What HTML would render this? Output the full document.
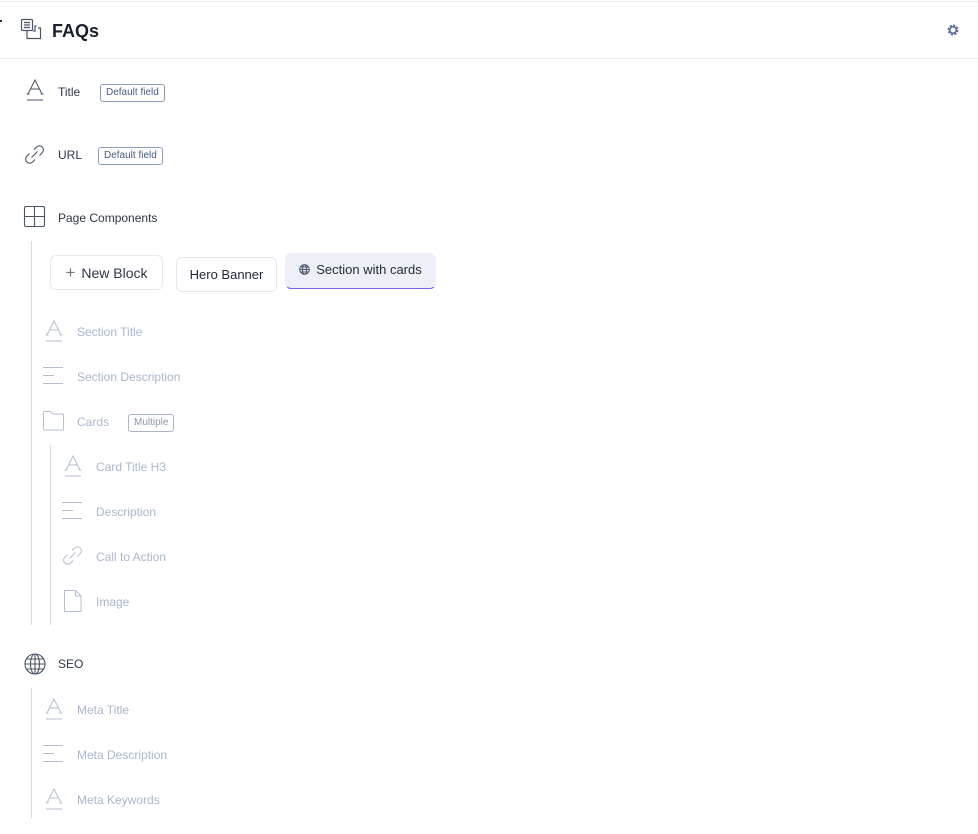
<!DOCTYPE html>
<html><head><meta charset="utf-8"><style>
*{margin:0;padding:0;box-sizing:border-box}
body{width:978px;height:834px;background:#fff;font-family:"Liberation Sans",sans-serif;position:relative;overflow:hidden}
.a{position:absolute}
.t{position:absolute;font-size:12px;line-height:14px;white-space:nowrap}
.d{color:#2d3748}
.l{color:#a9b7ce}
.badge{position:absolute;font-size:10px;line-height:16px;border:1px solid #8a9bbd;border-radius:3px;padding:0 5px;color:#4a5b80}
.vl{position:absolute;width:1px;background:#d5dbe5}
svg{position:absolute;overflow:visible}
.btn{position:absolute;border:1px solid #e6e9ef;border-radius:6px;font-size:14px;color:#1f2937;display:flex;align-items:center;justify-content:center}
</style></head><body>
<div class="a" style="left:0;top:1px;width:978px;height:1px;background:#eceef2"></div>
<div class="a" style="left:0;top:58px;width:978px;height:1px;background:#eceef2"></div>
<div class="a" style="left:0;top:20px;width:2px;height:2px;background:#333"></div>
<svg style="left:21px;top:19px" width="22" height="22" viewBox="0 0 22 22" fill="none" stroke="#4a5568" stroke-width="1.2"><rect x="0.5" y="0.5" width="11" height="11" rx="1"/><path d="M3 3.5h6M3 6h6M3 8.5h6"/><path d="M14 8v-1h1.5M6 12v7.5h13.5V9h-2.5"/><path d="M9 12v-0.5M12 12h2v-4"/></svg>
<div class="a" style="left:52px;top:20px;font-size:18px;font-weight:bold;color:#1a202c;line-height:22px">FAQs</div>
<svg style="left:947px;top:24px" width="12" height="12" viewBox="0 0 12 12"><circle cx="6" cy="6" r="4.2" fill="none" stroke="#5f6f94" stroke-width="2.6" stroke-dasharray="2 1.3"/><circle cx="6" cy="6" r="3.2" fill="none" stroke="#5f6f94" stroke-width="1.6"/></svg>

<!-- Title -->
<svg style="left:26px;top:79px" width="18" height="22" viewBox="0 0 18 22" fill="none" stroke="#4a5568" stroke-width="1"><path d="M2 15L9 1l7 14M4.5 10h9M0.5 15h3M14.5 15h3M1 21h16"/></svg>
<div class="t d" style="left:58px;top:85px">Title</div>
<div class="badge" style="left:100px;top:84px">Default field</div>
<!-- URL -->
<svg style="left:24px;top:144px" width="21" height="21" viewBox="0 0 21 21" fill="none" stroke="#4a5568" stroke-width="1.1"><path d="M7.5 13.5l6-6M10 5.5l2.5-2.5a4 4 0 015.7 5.7L15.5 11.5M11 15.5l-2.5 2.5a4 4 0 01-5.7-5.7L5.5 9.5"/></svg>
<div class="t d" style="left:58px;top:148px">URL</div>
<div class="badge" style="left:98px;top:147px">Default field</div>
<!-- Page Components -->
<svg style="left:24px;top:206px" width="21" height="21" viewBox="0 0 21 21" fill="none" stroke="#4a5568" stroke-width="1.1"><rect x="0.5" y="0.5" width="20" height="20" rx="1.5"/><path d="M10.5 0.5v20M0.5 10.5h20"/></svg>
<div class="t d" style="left:58px;top:211px">Page Components</div>
<div class="vl" style="left:31px;top:241px;height:384px"></div>

<div class="btn" style="left:50px;top:255px;width:113px;height:35px;color:#2d3748"><span style="font-size:17px;color:#6b7280;margin-right:6px;font-weight:300">+</span>New Block</div>
<div class="btn" style="left:176px;top:257px;width:101px;height:35px;font-size:13px">Hero Banner</div>
<div class="btn" style="left:285px;top:253px;width:151px;height:36px;background:#eef0f8;border-color:#eef0f8;border-bottom:1.5px solid #6e62e5;font-size:13px;padding-bottom:4px"><svg style="position:static;margin-right:6px" width="11" height="11" viewBox="0 0 11 11" fill="none" stroke="#4a5568" stroke-width="1"><circle cx="5.5" cy="5.5" r="4.8"/><ellipse cx="5.5" cy="5.5" rx="2" ry="4.8"/><path d="M0.7 5.5h9.6M1.5 3h8M1.5 8h8"/></svg>Section with cards</div>

<!-- sub items -->
<svg style="left:45px;top:320px" width="18" height="22" viewBox="0 0 18 22" fill="none" stroke="#b5bfd0" stroke-width="1"><path d="M2 15L9 1l7 14M4.5 10h9M0.5 15h3M14.5 15h3M1 21h16"/></svg>
<div class="t l" style="left:77px;top:325px">Section Title</div>
<svg style="left:43px;top:367px" width="21" height="18" viewBox="0 0 21 18" fill="none" stroke="#b5bfd0" stroke-width="1"><path d="M0 0.5h20M0 8.5h11M0 16.5h20"/></svg>
<div class="t l" style="left:77px;top:370px">Section Description</div>
<svg style="left:43px;top:410px" width="21" height="21" viewBox="0 0 21 21" fill="none" stroke="#b5bfd0" stroke-width="1"><path d="M0.5 2.5a1 1 0 011-1h6l2 2.5h10a1 1 0 011 1v14a1 1 0 01-1 1h-18a1 1 0 01-1-1zM9.5 4h10.5"/></svg>
<div class="t l" style="left:77px;top:415px">Cards</div>
<div class="badge" style="left:128px;top:414px;color:#8a96ad;border-color:#a9b4c8">Multiple</div>
<div class="vl" style="left:50px;top:445px;height:180px"></div>

<svg style="left:64px;top:455px" width="18" height="22" viewBox="0 0 18 22" fill="none" stroke="#b5bfd0" stroke-width="1"><path d="M2 15L9 1l7 14M4.5 10h9M0.5 15h3M14.5 15h3M1 21h16"/></svg>
<div class="t l" style="left:96px;top:460px">Card Title H3</div>
<svg style="left:62px;top:502px" width="21" height="18" viewBox="0 0 21 18" fill="none" stroke="#b5bfd0" stroke-width="1"><path d="M0 0.5h20M0 8.5h11M0 16.5h20"/></svg>
<div class="t l" style="left:96px;top:505px">Description</div>
<svg style="left:62px;top:545px" width="21" height="21" viewBox="0 0 21 21" fill="none" stroke="#b5bfd0" stroke-width="1"><path d="M7.5 13.5l6-6M10 5.5l2.5-2.5a4 4 0 015.7 5.7L15.5 11.5M11 15.5l-2.5 2.5a4 4 0 01-5.7-5.7L5.5 9.5"/></svg>
<div class="t l" style="left:96px;top:550px">Call to Action</div>
<svg style="left:64px;top:590px" width="18" height="22" viewBox="0 0 18 22" fill="none" stroke="#b5bfd0" stroke-width="1"><path d="M0.5 0.5h11l5.5 5.5v15.5h-16.5zM11.5 0.5v5.5h5.5"/></svg>
<div class="t l" style="left:96px;top:595px">Image</div>

<!-- SEO -->
<svg style="left:24px;top:653px" width="22" height="22" viewBox="0 0 22 22" fill="none" stroke="#4a5568" stroke-width="1.1"><circle cx="11" cy="11" r="10"/><ellipse cx="11" cy="11" rx="4.5" ry="10"/><path d="M1 11h20M11 1v20M2.5 6h17M2.5 16h17"/></svg>
<div class="t d" style="left:58px;top:657px">SEO</div>
<div class="vl" style="left:31px;top:688px;height:130px"></div>
<svg style="left:45px;top:698px" width="18" height="22" viewBox="0 0 18 22" fill="none" stroke="#b5bfd0" stroke-width="1"><path d="M2 15L9 1l7 14M4.5 10h9M0.5 15h3M14.5 15h3M1 21h16"/></svg>
<div class="t l" style="left:77px;top:703px">Meta Title</div>
<svg style="left:43px;top:745px" width="21" height="18" viewBox="0 0 21 18" fill="none" stroke="#b5bfd0" stroke-width="1"><path d="M0 0.5h20M0 8.5h11M0 16.5h20"/></svg>
<div class="t l" style="left:77px;top:748px">Meta Description</div>
<svg style="left:45px;top:788px" width="18" height="22" viewBox="0 0 18 22" fill="none" stroke="#b5bfd0" stroke-width="1"><path d="M2 15L9 1l7 14M4.5 10h9M0.5 15h3M14.5 15h3M1 21h16"/></svg>
<div class="t l" style="left:77px;top:793px">Meta Keywords</div>
</body></html>
